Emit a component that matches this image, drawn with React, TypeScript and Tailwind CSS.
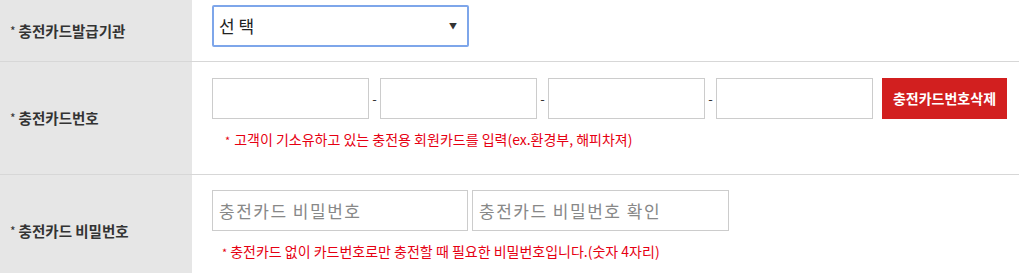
import React from 'react';

const font = { fontFamily: '"Noto Sans CJK KR", "Noto Sans", sans-serif' };

function Label({ text }: { text: string }) {
  return (
    <div className="flex w-[192px] shrink-0 items-center bg-[#e6e6e6] pl-[10px] text-[14.5px] font-bold text-[#333]">
      <span className="mr-[3px] text-[12px] font-normal">*</span>
      {text}
    </div>
  );
}

function Row({ label, height, children }: { label: string; height: string; children: React.ReactNode }) {
  return (
    <div className={`flex shrink-0 border-b border-[#d7d7d7] ${height}`}>
      <Label text={label} />
      <div className="flex-1 pl-[20px]">{children}</div>
    </div>
  );
}

export default function App() {
  return (
    <div className="flex h-[273px] w-[1019px] flex-col overflow-hidden bg-white" style={font}>
      <Row label="충전카드발급기관" height="h-[62px]">
        <div className="pt-[5px]">
          <div className="flex h-[42px] w-[257px] items-center justify-between rounded-[2px] border-2 border-[#7ea6ea] pl-[5px] pr-[10px] text-[17px] text-[#222]">
            <span>선 택</span>
            <span className="text-[8px] text-[#333]">▼</span>
          </div>
        </div>
      </Row>
      <Row label="충전카드번호" height="h-[113px]">
        <div className="flex items-center pt-[16px]">
          {[0, 1, 2, 3].map((i) => (
            <React.Fragment key={i}>
              {i > 0 && <span className="w-[11px] text-center text-[13px] text-[#333]">-</span>}
              <div className="h-[41px] w-[157px] border border-[#cccccc] bg-white" />
            </React.Fragment>
          ))}
          <button className="ml-[9px] flex h-[41px] w-[125px] items-center justify-center bg-[#d21f1f] text-[14px] font-bold text-white">
            충전카드번호삭제
          </button>
        </div>
        <p className="mt-[10px] pl-[13px] text-[14px] text-[#e60012]">
          <span className="mr-[4px] text-[11px]">*</span>고객이 기소유하고 있는 충전용 회원카드를 입력(ex.환경부, 해피차져)
        </p>
      </Row>
      <Row label="충전카드 비밀번호" height="h-[113px]">
        <div className="flex gap-[4px] pt-[15px]">
          <div className="flex h-[41px] w-[256px] items-center border border-[#cccccc] pl-[6px] text-[17px] tracking-[1.5px] text-[#888]">
            충전카드 비밀번호
          </div>
          <div className="flex h-[41px] w-[257px] items-center border border-[#cccccc] pl-[6px] text-[17px] tracking-[1.5px] text-[#888]">
            충전카드 비밀번호 확인
          </div>
        </div>
        <p className="mt-[10px] pl-[10px] text-[14px] text-[#e60012]">
          <span className="mr-[3px] text-[11px]">*</span>충전카드 없이 카드번호로만 충전할 때 필요한 비밀번호입니다.(숫자 4자리)
        </p>
      </Row>
    </div>
  );
}
